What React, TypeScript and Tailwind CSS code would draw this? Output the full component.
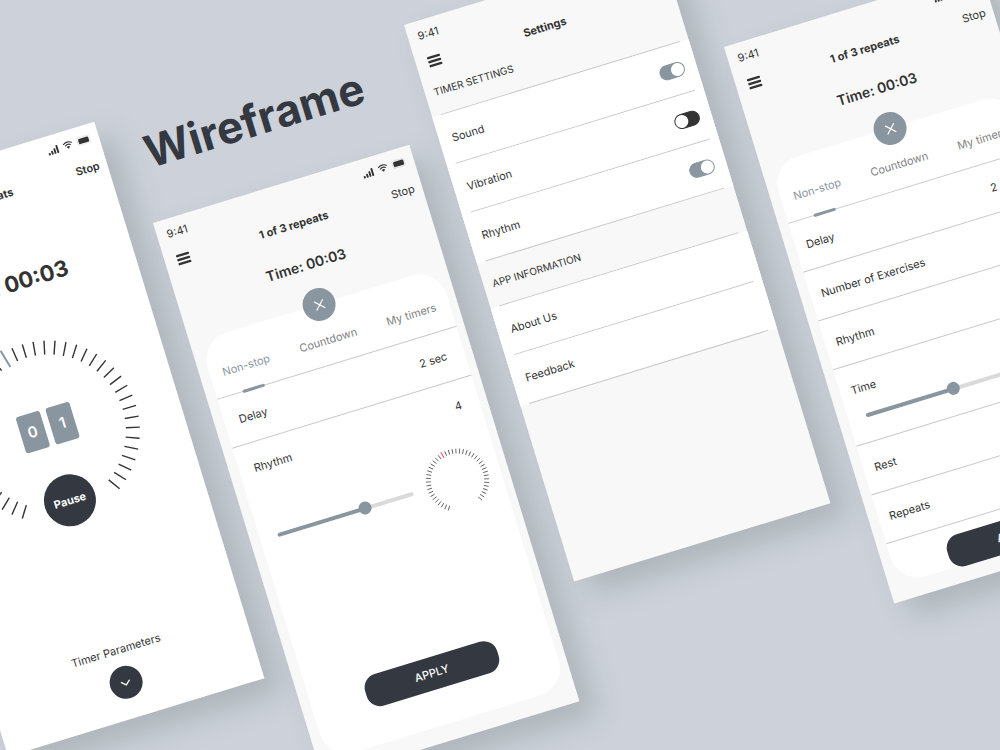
import { useId } from "react";
import type { ReactNode } from "react";
import { clsx } from "clsx";

const TICK_COUNT = 43;
const TICK_SPAN = 292;

type DialProps = {
  className: string;
  accent: string;
  tickWidth: number;
};

const Dial = ({ className, accent, tickWidth }: DialProps) => (
  <svg viewBox="-95 -95 190 190" className={className} aria-hidden="true">
    {Array.from({ length: TICK_COUNT }, (_, i) => {
      const angle = -TICK_SPAN / 2 + (i * TICK_SPAN) / (TICK_COUNT - 1);
      const active = i === 19;
      return (
        <line
          key={i}
          x1={0}
          x2={0}
          y1={active ? -94 : -91}
          y2={active ? -75 : -77}
          stroke={active ? accent : "#333333"}
          strokeWidth={active ? tickWidth * 1.4 : tickWidth}
          transform={`rotate(${angle})`}
        />
      );
    })}
  </svg>
);

const StatusBar = () => (
  <div className="flex h-[30px] shrink-0 items-center justify-between pr-2 pl-[10px]">
    <span className="text-[11px] leading-4">9:41</span>
    <svg viewBox="0 0 46 12" className="h-3 w-[46px]" aria-hidden="true">
      <g fill="#333333">
        <rect x="1" y="8" width="1.9" height="2.4" rx="0.5" />
        <rect x="3.9" y="6.6" width="1.9" height="3.8" rx="0.5" />
        <rect x="6.8" y="4.7" width="1.9" height="5.7" rx="0.5" />
        <rect x="9.7" y="2.4" width="1.9" height="8" rx="0.5" />
        <path d="M20.2 7.4 21.9 9.6 23.6 7.4a2.8 2.8 0 0 0-3.4 0Z" />
        <rect x="33" y="3" width="10.6" height="5.4" rx="1.2" />
      </g>
      <g fill="none" stroke="#333333" strokeWidth="1.1">
        <path d="M17.4 4.3a6.8 6.8 0 0 1 9 0" />
        <path d="M18.9 6.1a4.6 4.6 0 0 1 6 0" />
      </g>
      <rect
        x="31.9"
        y="1.9"
        width="12.8"
        height="7.6"
        rx="2"
        fill="none"
        stroke="#333333"
        strokeOpacity="0.18"
        strokeWidth="0.6"
      />
    </svg>
  </div>
);

type NavBarProps = {
  title: string;
  stop?: boolean;
  strong?: boolean;
};

const NavBar = ({ title, stop, strong }: NavBarProps) => (
  <div className="grid h-[25px] shrink-0 grid-cols-[1fr_auto_1fr] items-center px-2">
    <button type="button" aria-label="Menu" className="justify-self-start pl-1">
      <svg viewBox="0 0 14 12" className="h-3 w-[14px]" aria-hidden="true">
        <g stroke="#333333" strokeWidth="2.4" strokeLinecap="round">
          <path d="M1.4 1.8H12.6" />
          <path d="M1.4 6H12.6" />
          <path d="M1.4 10.2H12.6" />
        </g>
      </svg>
    </button>
    <h2 className="text-[11px] leading-4 font-bold">{title}</h2>
    {stop && (
      <button
        type="button"
        className={clsx(
          "justify-self-end text-[11px] leading-4",
          strong && "font-semibold",
        )}
      >
        Stop
      </button>
    )}
  </div>
);

type PhoneProps = {
  className: string;
  children: ReactNode;
};

const Phone = ({ className, children }: PhoneProps) => (
  <section
    className={clsx(
      "absolute flex h-[582px] w-[268px] origin-top-left -rotate-17 flex-col text-[#333333] shadow-[14px_18px_28px_rgba(96,106,106,0.28)]",
      className,
    )}
  >
    <StatusBar />
    {children}
  </section>
);

const TABS = ["Non-stop", "Countdown", "My timers"];

const TimerPanel = ({ children }: { children: ReactNode }) => (
  <>
    <NavBar title="1 of 3 repeats" stop />
    <p className="h-[71px] shrink-0 pt-5 text-center text-[14px] leading-5 font-semibold">
      Time: 00:03
    </p>
    <div className="relative mr-2 mb-[17px] ml-[10px] flex min-h-0 flex-1 flex-col rounded-[28px] bg-white">
      <button
        type="button"
        aria-label="Close"
        className="absolute -top-4 left-1/2 flex size-[33px] -translate-x-1/2 items-center justify-center rounded-full bg-[#8a969f]"
      >
        <svg viewBox="0 0 12 12" className="size-3" aria-hidden="true">
          <path d="M1.5 1.5 10.5 10.5M10.5 1.5 1.5 10.5" stroke="#ffffff" strokeWidth="1.2" />
        </svg>
      </button>
      <div className="flex h-[62px] shrink-0 justify-between border-b border-[#c9c9c9] pr-[14px] pl-[13px]">
        {TABS.map((tab, i) => (
          <button
            key={tab}
            type="button"
            className={clsx(
              "relative pt-3 text-[11px] leading-4",
              i === 0 ? "text-[#8a969f]" : "text-[#808080]",
            )}
          >
            {tab}
            {i === 0 && (
              <span className="absolute -bottom-[2px] left-1/2 h-[3px] w-[23px] -translate-x-1/2 rounded-full bg-[#8a969f]" />
            )}
          </button>
        ))}
      </div>
      {children}
    </div>
  </>
);

type RowProps = {
  label: string;
  value?: string;
  className?: string;
};

const Row = ({ label, value, className }: RowProps) => (
  <div
    className={clsx(
      "flex h-[51px] shrink-0 items-center justify-between border-b border-[#c9c9c9] pr-[18px] text-[11px] leading-4",
      className,
    )}
  >
    <span>{label}</span>
    {value && <span>{value}</span>}
  </div>
);

const Slider = ({ label }: { label: string }) => (
  <input
    type="range"
    aria-label={label}
    defaultValue={66}
    className="block h-[13px] w-[142px] appearance-none bg-transparent [&::-webkit-slider-runnable-track]:h-1 [&::-webkit-slider-runnable-track]:rounded-full [&::-webkit-slider-runnable-track]:bg-[linear-gradient(to_right,#8a969f_64%,#dadada_64%)] [&::-webkit-slider-thumb]:-mt-[5px] [&::-webkit-slider-thumb]:size-[13px] [&::-webkit-slider-thumb]:appearance-none [&::-webkit-slider-thumb]:rounded-full [&::-webkit-slider-thumb]:bg-[#8a969f]"
  />
);

const ApplyButton = ({ className }: { className: string }) => (
  <button
    type="button"
    className={clsx(
      "h-[33px] w-[138px] shrink-0 self-center rounded-[14px] bg-[#343840] text-[11px] font-medium text-white",
      className,
    )}
  >
    APPLY
  </button>
);

type SettingProps = {
  label: string;
  on?: boolean;
  toggle?: boolean;
};

const Setting = ({ label, on, toggle }: SettingProps) => {
  const id = useId();

  return (
    <div className="bg-white">
      <div className="mx-[9px] flex h-[51px] items-center justify-between border-b border-[#c9c9c9] pr-[3px] pl-1 text-[11px] leading-4">
        {toggle ? <label htmlFor={id}>{label}</label> : <a href="#">{label}</a>}
        {toggle && (
          <input
            id={id}
            type="checkbox"
            defaultChecked={on}
            className="h-[15px] w-[26px] appearance-none rounded-full border border-[#333333] bg-[#333333] before:block before:size-[13px] before:rounded-full before:bg-white checked:border-[#8a969f] checked:bg-[#8a969f] checked:before:translate-x-[11px]"
          />
        )}
      </div>
    </div>
  );
};

const SectionTitle = ({ children }: { children: ReactNode }) => (
  <h3 className="mx-[9px] border-b border-[#c9c9c9] pb-4 text-[10px] leading-[14px]">
    {children}
  </h3>
);

const App = () => {
  return (
    <main className="relative h-screen overflow-hidden bg-[#cdd2da] font-['Inter',sans-serif]">
      <h1 className="absolute top-[132px] left-[139px] origin-top-left -rotate-17 text-[44px] leading-none font-bold text-[#343840]">
        Wireframe
      </h1>

      <Phone className="top-[200px] -left-[162px] bg-white">
        <NavBar title="1 of 3 repeats" stop strong />
        <p className="mt-[62px] text-center text-[22px] leading-7 font-bold">
          Time: 00:03
        </p>
        <div className="relative mt-[43px]">
          <Dial className="mx-auto size-[190px]" accent="#8a969f" tickWidth={1.4} />
          <div className="absolute inset-0 flex flex-col items-center pt-[72px]">
            <div className="flex gap-[6px] text-[15px] font-semibold text-white">
              {["0", "1"].map((digit) => (
                <span
                  key={digit}
                  className="flex h-[38px] w-[25px] items-center justify-center rounded-[3px] bg-[#8a969f]"
                >
                  {digit}
                </span>
              ))}
            </div>
            <button
              type="button"
              className="mt-[31px] size-[52px] shrink-0 rounded-full bg-[#343840] text-[11px] font-bold text-white"
            >
              Pause
            </button>
          </div>
        </div>
        <div className="mt-auto flex flex-col items-center gap-[9px] pb-5 text-[11px] leading-4">
          <p>Timer Parameters</p>
          <button
            type="button"
            aria-label="Show timer parameters"
            className="flex size-[33px] items-center justify-center rounded-full bg-[#343840]"
          >
            <svg viewBox="0 0 12 12" className="size-3" aria-hidden="true">
              <path d="M1.5 4 6 8 10.5 4" fill="none" stroke="#ffffff" strokeWidth="1.3" />
            </svg>
          </button>
        </div>
      </Phone>

      <Phone className="top-[223px] left-[153px] bg-[#f8f8f8]">
        <TimerPanel>
          <Row label="Delay" value="2 sec" className="pl-[15px]" />
          <Row label="Rhythm" value="4" className="border-transparent pl-[15px]" />
          <div className="mt-3 flex items-center gap-[13px] pl-[18px]">
            <Slider label="Rhythm" />
            <Dial className="size-[66px] shrink-0" accent="#ff3b57" tickWidth={2} />
          </div>
          <ApplyButton className="mt-auto mb-9" />
        </TimerPanel>
      </Phone>

      <Phone className="top-[25px] left-[404px] bg-[#f8f8f8]">
        <NavBar title="Settings" />
        <div className="pt-[11px]">
          <SectionTitle>TIMER SETTINGS</SectionTitle>
        </div>
        <Setting label="Sound" toggle on />
        <Setting label="Vibration" toggle />
        <Setting label="Rhythm" toggle on />
        <div className="pt-4">
          <SectionTitle>APP INFORMATION</SectionTitle>
        </div>
        <Setting label="About Us" />
        <Setting label="Feedback" />
      </Phone>

      <Phone className="top-[47px] left-[724px] bg-[#f8f8f8]">
        <TimerPanel>
          <Row label="Delay" value="2 sec" className="pl-[11px]" />
          <Row label="Number of Exercises" className="pl-[11px]" />
          <Row label="Rhythm" className="pl-[11px]" />
          <div className="h-20 shrink-0 border-b border-[#c9c9c9] text-[11px] leading-4">
            <p className="flex h-[46px] items-center pt-1 pl-[11px]">Time</p>
            <div className="pl-[18px]">
              <Slider label="Time" />
            </div>
          </div>
          <Row label="Rest" className="pl-[11px]" />
          <Row label="Repeats" className="pl-[11px]" />
          <ApplyButton className="mt-[11px]" />
        </TimerPanel>
      </Phone>
    </main>
  );
};

export default App;
